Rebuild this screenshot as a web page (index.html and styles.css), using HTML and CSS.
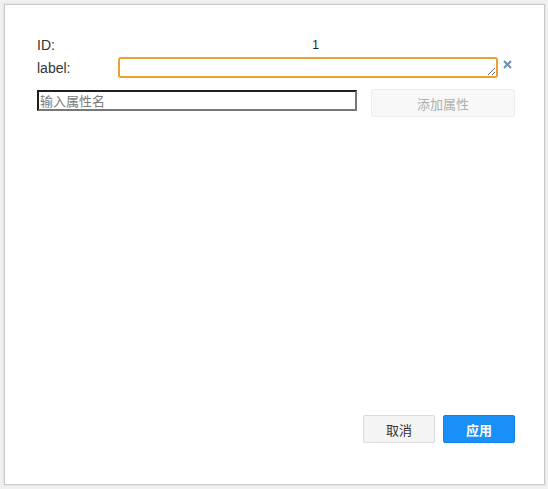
FILE: index.html
```html
<!DOCTYPE html>
<html lang="zh">
<head>
<meta charset="utf-8">
<title>属性编辑</title>
<link rel="stylesheet" href="styles.css">
</head>
<body>
<div class="dialog">
  <div class="row row-id">
    <span class="key">ID:</span>
    <span class="val">1</span>
  </div>
  <div class="row row-label">
    <span class="key">label:</span>
    <textarea class="label-input"></textarea>
    <svg class="clear" width="9" height="9" viewBox="0 0 9 9"><path d="M1 1L8 8M8 1L1 8" stroke="#6a91b2" stroke-width="2" stroke-linecap="butt"/></svg>
  </div>
  <div class="row row-add">
    <input class="attr-input" type="text" placeholder="输入属性名">
    <button class="btn-add" disabled>添加属性</button>
  </div>
  <div class="footer">
    <button class="btn btn-cancel">取消</button>
    <button class="btn btn-ok">应用</button>
  </div>
</div>
</body>
</html>
```
FILE: styles.css
```css
html, body {
  margin: 0;
  padding: 0;
}
body {
  background: #f0f0f0;
  padding: 4px 3px 4px 4px;
  height: 489px;
  box-sizing: border-box;
  font-family: "Liberation Sans", Arial, "Noto Sans CJK SC", sans-serif;
  color: #333;
}
.dialog {
  box-sizing: border-box;
  height: 481px;
  background: #fff;
  border: 1px solid #c9c9c9;
  box-shadow: 0 0 2px rgba(0,0,0,0.12);
  padding: 32px 29px 41px 32px;
  display: flex;
  flex-direction: column;
}
.row {
  display: flex;
  align-items: center;
}
.key {
  width: 81px;
  font-size: 14px;
  color: #333;
  flex: none;
}
.row-id {
  height: 16px;
}
.val {
  width: 395px;
  text-align: center;
  font-size: 12px;
  color: #222;
}
.row-label {
  margin-top: 4px;
  height: 21px;
}
.label-input {
  box-sizing: border-box;
  width: 380px;
  height: 21px;
  border: 2px solid #eda12c;
  border-radius: 3px;
  padding: 1px 3px;
  margin: 0;
  outline: none;
  font-family: inherit;
  font-size: 13px;
  flex: none;
}
.clear {
  display: block;
  margin-left: 5px;
  margin-top: -6px;
  flex: none;
}
.row-add {
  margin-top: 11px;
  align-items: flex-start;
}
.attr-input {
  box-sizing: border-box;
  width: 320px;
  height: 21px;
  margin: 1px 0 0;
  padding: 0 1px;
  border: 2px solid;
  border-color: #1e1e1e #777 #777 #1e1e1e;
  font-family: "Noto Sans CJK SC", sans-serif;
  font-size: 13px;
  color: #333;
  outline: none;
}
.attr-input::placeholder {
  color: #7a7a7a;
}
.btn-add {
  box-sizing: border-box;
  width: 144px;
  height: 28px;
  margin-left: 14px;
  background: #f8f8f8;
  border: 1px solid #ececec;
  border-radius: 2px;
  color: #b0b0b0;
  font-family: "Noto Sans CJK SC", sans-serif;
  font-size: 13px;
  padding: 0;
}
.footer {
  margin-top: auto;
  display: flex;
  justify-content: flex-end;
  gap: 8px;
}
.btn {
  box-sizing: border-box;
  width: 72px;
  height: 28px;
  border-radius: 2px;
  font-family: "Noto Sans CJK SC", sans-serif;
  font-size: 13px;
  padding: 0;
}
.btn-cancel {
  background: #f4f4f4;
  border: 1px solid #dcdcdc;
  color: #333;
}
.btn-ok {
  background: #1890f5;
  border: 1px solid #1385e8;
  color: #fff;
  font-weight: bold;
}
```
